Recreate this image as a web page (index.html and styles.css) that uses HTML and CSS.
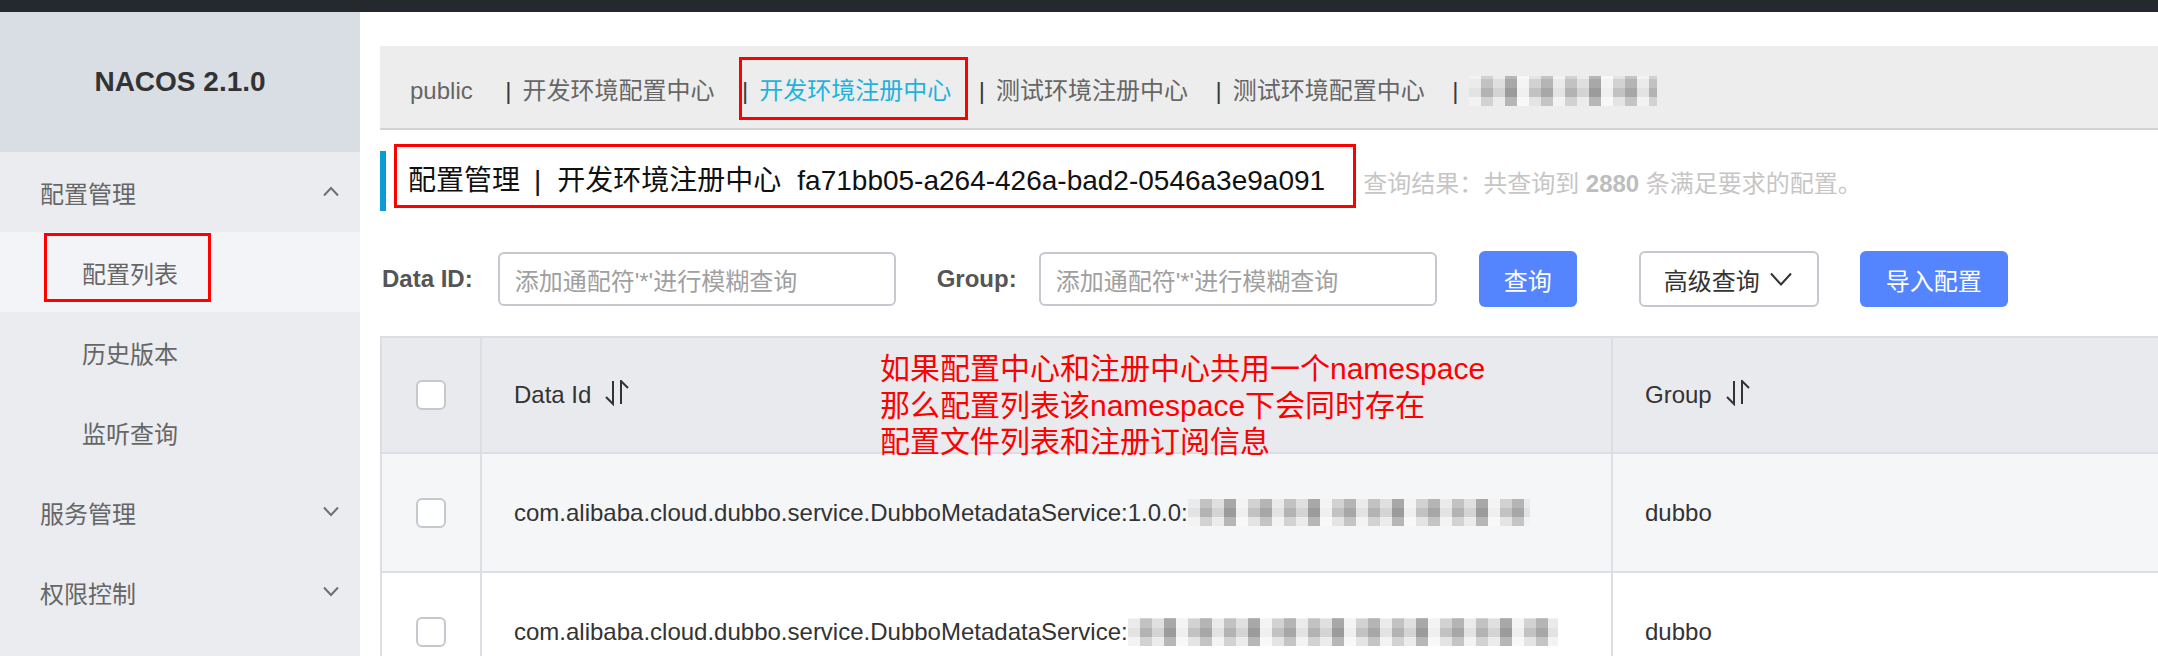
FILE: index.html
```html
<!DOCTYPE html>
<html lang="zh-CN">
<head>
<meta charset="utf-8">
<title>NACOS 2.1.0</title>
<link rel="stylesheet" href="styles.css">
</head>
<body>
<div class="topbar"></div>
<div class="app">
  <aside class="sidebar">
    <div class="logo">NACOS 2.1.0</div>
    <ul class="menu">
      <li class="item">配置管理
        <svg class="chev" width="16" height="11" viewBox="0 0 16 11"><polyline points="1,9.5 8,2 15,9.5"/></svg>
      </li>
      <li class="sub active">配置列表</li>
      <li class="sub">历史版本</li>
      <li class="sub">监听查询</li>
      <li class="item">服务管理
        <svg class="chev" width="16" height="11" viewBox="0 0 16 11"><polyline points="1,1.5 8,9 15,1.5"/></svg>
      </li>
      <li class="item">权限控制
        <svg class="chev" width="16" height="11" viewBox="0 0 16 11"><polyline points="1,1.5 8,9 15,1.5"/></svg>
      </li>
    </ul>
  </aside>

  <main class="main">
    <nav class="tabs">
      <span class="ns first">public</span>
      <span class="ns"><span class="sep">|</span>开发环境配置中心</span>
      <span class="ns active"><span class="sep">|</span>开发环境注册中心</span>
      <span class="ns"><span class="sep">|</span>测试环境注册中心</span>
      <span class="ns"><span class="sep">|</span>测试环境配置中心</span>
      <span class="ns"><span class="sep">|</span><span class="mosaic tabblur"></span></span>
    </nav>

    <div class="title-row">
      <div class="bar"></div>
      <div class="title">
        <span>配置管理</span>
        <span class="t-sep">|</span>
        <span class="t-part">开发环境注册中心</span>
        <span class="t-part">fa71bb05-a264-426a-bad2-0546a3e9a091</span>
      </div>
      <div class="result">查询结果：共查询到 <b>2880</b> 条满足要求的配置。</div>
    </div>

    <div class="search">
      <label class="lbl">Data ID:</label>
      <div class="input first-input">添加通配符'*'进行模糊查询</div>
      <label class="lbl group-lbl">Group:</label>
      <div class="input second-input">添加通配符'*'进行模糊查询</div>
      <button class="btn primary query">查询</button>
      <button class="btn adv">高级查询
        <svg width="22" height="14" viewBox="0 0 22 14"><polyline points="1,1.5 11,12.5 21,1.5"/></svg>
      </button>
      <button class="btn primary import">导入配置</button>
    </div>

    <div class="table">
      <div class="row head">
        <div class="cell c-check"><span class="checkbox"></span></div>
        <div class="cell c-id">Data Id
          <svg class="sort" width="24" height="26" viewBox="0 0 24 26"><path d="M8 1V24L1 17M16 24V1L23 8"/></svg>
        </div>
        <div class="cell c-group">Group
          <svg class="sort" width="24" height="26" viewBox="0 0 24 26"><path d="M8 1V24L1 17M16 24V1L23 8"/></svg>
        </div>
      </div>
      <div class="row odd">
        <div class="cell c-check"><span class="checkbox"></span></div>
        <div class="cell c-id">com.alibaba.cloud.dubbo.service.DubboMetadataService:1.0.0:<span class="mosaic blur1"></span></div>
        <div class="cell c-group">dubbo</div>
      </div>
      <div class="row">
        <div class="cell c-check"><span class="checkbox"></span></div>
        <div class="cell c-id">com.alibaba.cloud.dubbo.service.DubboMetadataService:<span class="mosaic blur2"></span></div>
        <div class="cell c-group">dubbo</div>
      </div>
      <div class="note">如果配置中心和注册中心共用一个namespace<br>那么配置列表该namespace下会同时存在<br>配置文件列表和注册订阅信息</div>
    </div>
  </main>
</div>
</body>
</html>
```

FILE: styles.css
```css
* { box-sizing: border-box; }

html, body {
  margin: 0;
  padding: 0;
}

body {
  width: 2158px;
  height: 656px;
  overflow: hidden;
  background: #ffffff;
  font-family: "Liberation Sans", "Noto Sans CJK SC", sans-serif;
}

.topbar {
  height: 12px;
  background: #25282d;
}

.app {
  display: flex;
  height: 644px;
  overflow: hidden;
}

/* ---------- sidebar ---------- */
.sidebar {
  width: 360px;
  flex: none;
  background: #eaecf0;
}

.logo {
  height: 140px;
  background: #d9dde4;
  display: flex;
  align-items: center;
  justify-content: center;
  font-size: 28px;
  font-weight: bold;
  color: #333333;
}

.menu {
  list-style: none;
  margin: 0;
  padding: 0;
}

.menu li {
  position: relative;
  height: 80px;
  display: flex;
  align-items: center;
  padding-top: 6px;
  font-size: 24px;
  color: #666666;
  line-height: 30px;
}

.menu .item {
  padding-left: 40px;
  padding-right: 21px;
  justify-content: space-between;
}

.menu .sub {
  padding-left: 82px;
}

.menu .sub.active {
  background: #f3f4f7;
}

.menu .sub.active::after {
  content: "";
  position: absolute;
  left: 44px;
  top: 1px;
  width: 161px;
  height: 63px;
  border: 3px solid #ff0000;
}

.chev {
  margin-bottom: 8px;
}

.chev polyline {
  fill: none;
  stroke: #707070;
  stroke-width: 2;
}

/* ---------- main ---------- */
.main {
  flex: 1;
  min-width: 0;
  padding: 34px 0 0 20px;
}

.tabs {
  height: 84px;
  background: #ededed;
  border-bottom: 2px solid #d3d3d3;
  display: flex;
  align-items: center;
  padding: 8px 0 0 30px;
  font-size: 24px;
  color: #666666;
  white-space: nowrap;
}

.ns {
  position: relative;
  display: flex;
  align-items: center;
  line-height: 30px;
  margin-left: 27.5px;
}

.ns.first {
  margin-left: 0;
  margin-right: 5px;
}

.sep {
  color: #3a3a3a;
  margin-right: 11px;
}

.ns.active {
  color: #1db3dd;
}

.ns.active::after {
  content: "";
  position: absolute;
  left: -3px;
  right: -17px;
  top: -19px;
  bottom: -14px;
  border: 3px solid #ff0000;
}

.mosaic {
  display: inline-block;
  background-color: #d2d2d2;
  background-image:
    repeating-linear-gradient(90deg,
      rgba(255,255,255,0.55) 0 12px,
      rgba(0,0,0,0.08) 12px 24px,
      rgba(255,255,255,0.3) 24px 36px,
      rgba(0,0,0,0.2) 36px 48px,
      rgba(255,255,255,0.75) 48px 60px,
      rgba(0,0,0,0) 60px 72px,
      rgba(0,0,0,0.14) 72px 84px),
    repeating-linear-gradient(0deg,
      rgba(255,255,255,0.4) 0 9px,
      rgba(0,0,0,0.08) 9px 18px,
      rgba(255,255,255,0) 18px 27px);
}

.tabblur {
  width: 188px;
  height: 30px;
}

/* ---------- title row ---------- */
.title-row {
  display: flex;
  align-items: center;
  height: 60px;
  margin-top: 21px;
  white-space: nowrap;
}

.title-row .bar {
  width: 6px;
  align-self: stretch;
  background: #0a9dd4;
}

.title {
  position: relative;
  display: flex;
  align-items: center;
  margin-left: 22px;
  font-size: 28px;
  line-height: 40px;
  color: #111111;
}

.title::after {
  content: "";
  position: absolute;
  left: -14px;
  right: -31px;
  top: -17px;
  bottom: -7px;
  border: 3px solid #ff0000;
}

.t-sep {
  margin-left: 14px;
}

.t-part {
  margin-left: 16px;
}

.result {
  margin-left: 38px;
  font-size: 24px;
  color: #c6c6c6;
}

.result b {
  color: #bdbdbd;
}

/* ---------- search ---------- */
.search {
  display: flex;
  align-items: center;
  height: 56px;
  margin-top: 40px;
  padding-left: 2px;
  white-space: nowrap;
}

.lbl {
  font-size: 24px;
  font-weight: bold;
  color: #555555;
}

.input {
  width: 398px;
  height: 54px;
  border: 2px solid #c6c8cf;
  border-radius: 6px;
  display: flex;
  align-items: center;
  padding-left: 15px;
  font-size: 24px;
  color: #a0a0a0;
}

.first-input {
  margin-left: 25px;
}

.group-lbl {
  margin-left: 41px;
}

.second-input {
  margin-left: 22px;
}

.btn {
  height: 56px;
  border-radius: 6px;
  font-family: "Liberation Sans", "Noto Sans CJK SC", sans-serif;
  font-size: 24px;
  padding: 0;
  display: flex;
  align-items: center;
  justify-content: center;
}

.btn.primary {
  background: #5584ff;
  border: none;
  color: #ffffff;
}

.btn.query {
  width: 98px;
  margin-left: 42px;
}

.btn.adv {
  width: 180px;
  margin-left: 62px;
  background: #ffffff;
  border: 2px solid #c6c8cf;
  color: #333333;
  justify-content: flex-start;
  padding-left: 23px;
}

.btn.adv svg {
  margin-left: 10px;
}

.btn.adv polyline {
  fill: none;
  stroke: #333333;
  stroke-width: 2;
}

.btn.import {
  width: 148px;
  margin-left: 41px;
}

/* ---------- table ---------- */
.table {
  position: relative;
  margin-top: 29px;
  border-top: 2px solid #dcdee3;
  border-left: 2px solid #dcdee3;
}

.row {
  display: flex;
  height: 119px;
  border-bottom: 2px solid #dcdee3;
  background: #ffffff;
  font-size: 24px;
  color: #333333;
  white-space: nowrap;
}

.row.head {
  height: 116px;
  background: #e9eaee;
}

.row.odd {
  background: #f5f6f8;
}

.cell {
  display: flex;
  align-items: center;
}

.c-check {
  width: 100px;
  flex: none;
  justify-content: center;
  border-right: 2px solid #dcdee3;
}

.c-id {
  width: 1131px;
  flex: none;
  padding-left: 32px;
  border-right: 2px solid #dcdee3;
}

.c-group {
  flex: 1;
  padding-left: 32px;
}

.checkbox {
  width: 30px;
  height: 30px;
  border: 2px solid #c6c8cf;
  border-radius: 6px;
  background: #ffffff;
}

.sort {
  margin-left: 14px;
  margin-bottom: 4px;
}

.sort path {
  fill: none;
  stroke: #333333;
  stroke-width: 2;
}

.blur1 {
  width: 342px;
  height: 27px;
}

.blur2 {
  width: 430px;
  height: 28px;
}

.note {
  position: absolute;
  left: 498px;
  top: 13px;
  font-size: 30px;
  line-height: 36.5px;
  color: #ff0000;
  white-space: nowrap;
}
```
